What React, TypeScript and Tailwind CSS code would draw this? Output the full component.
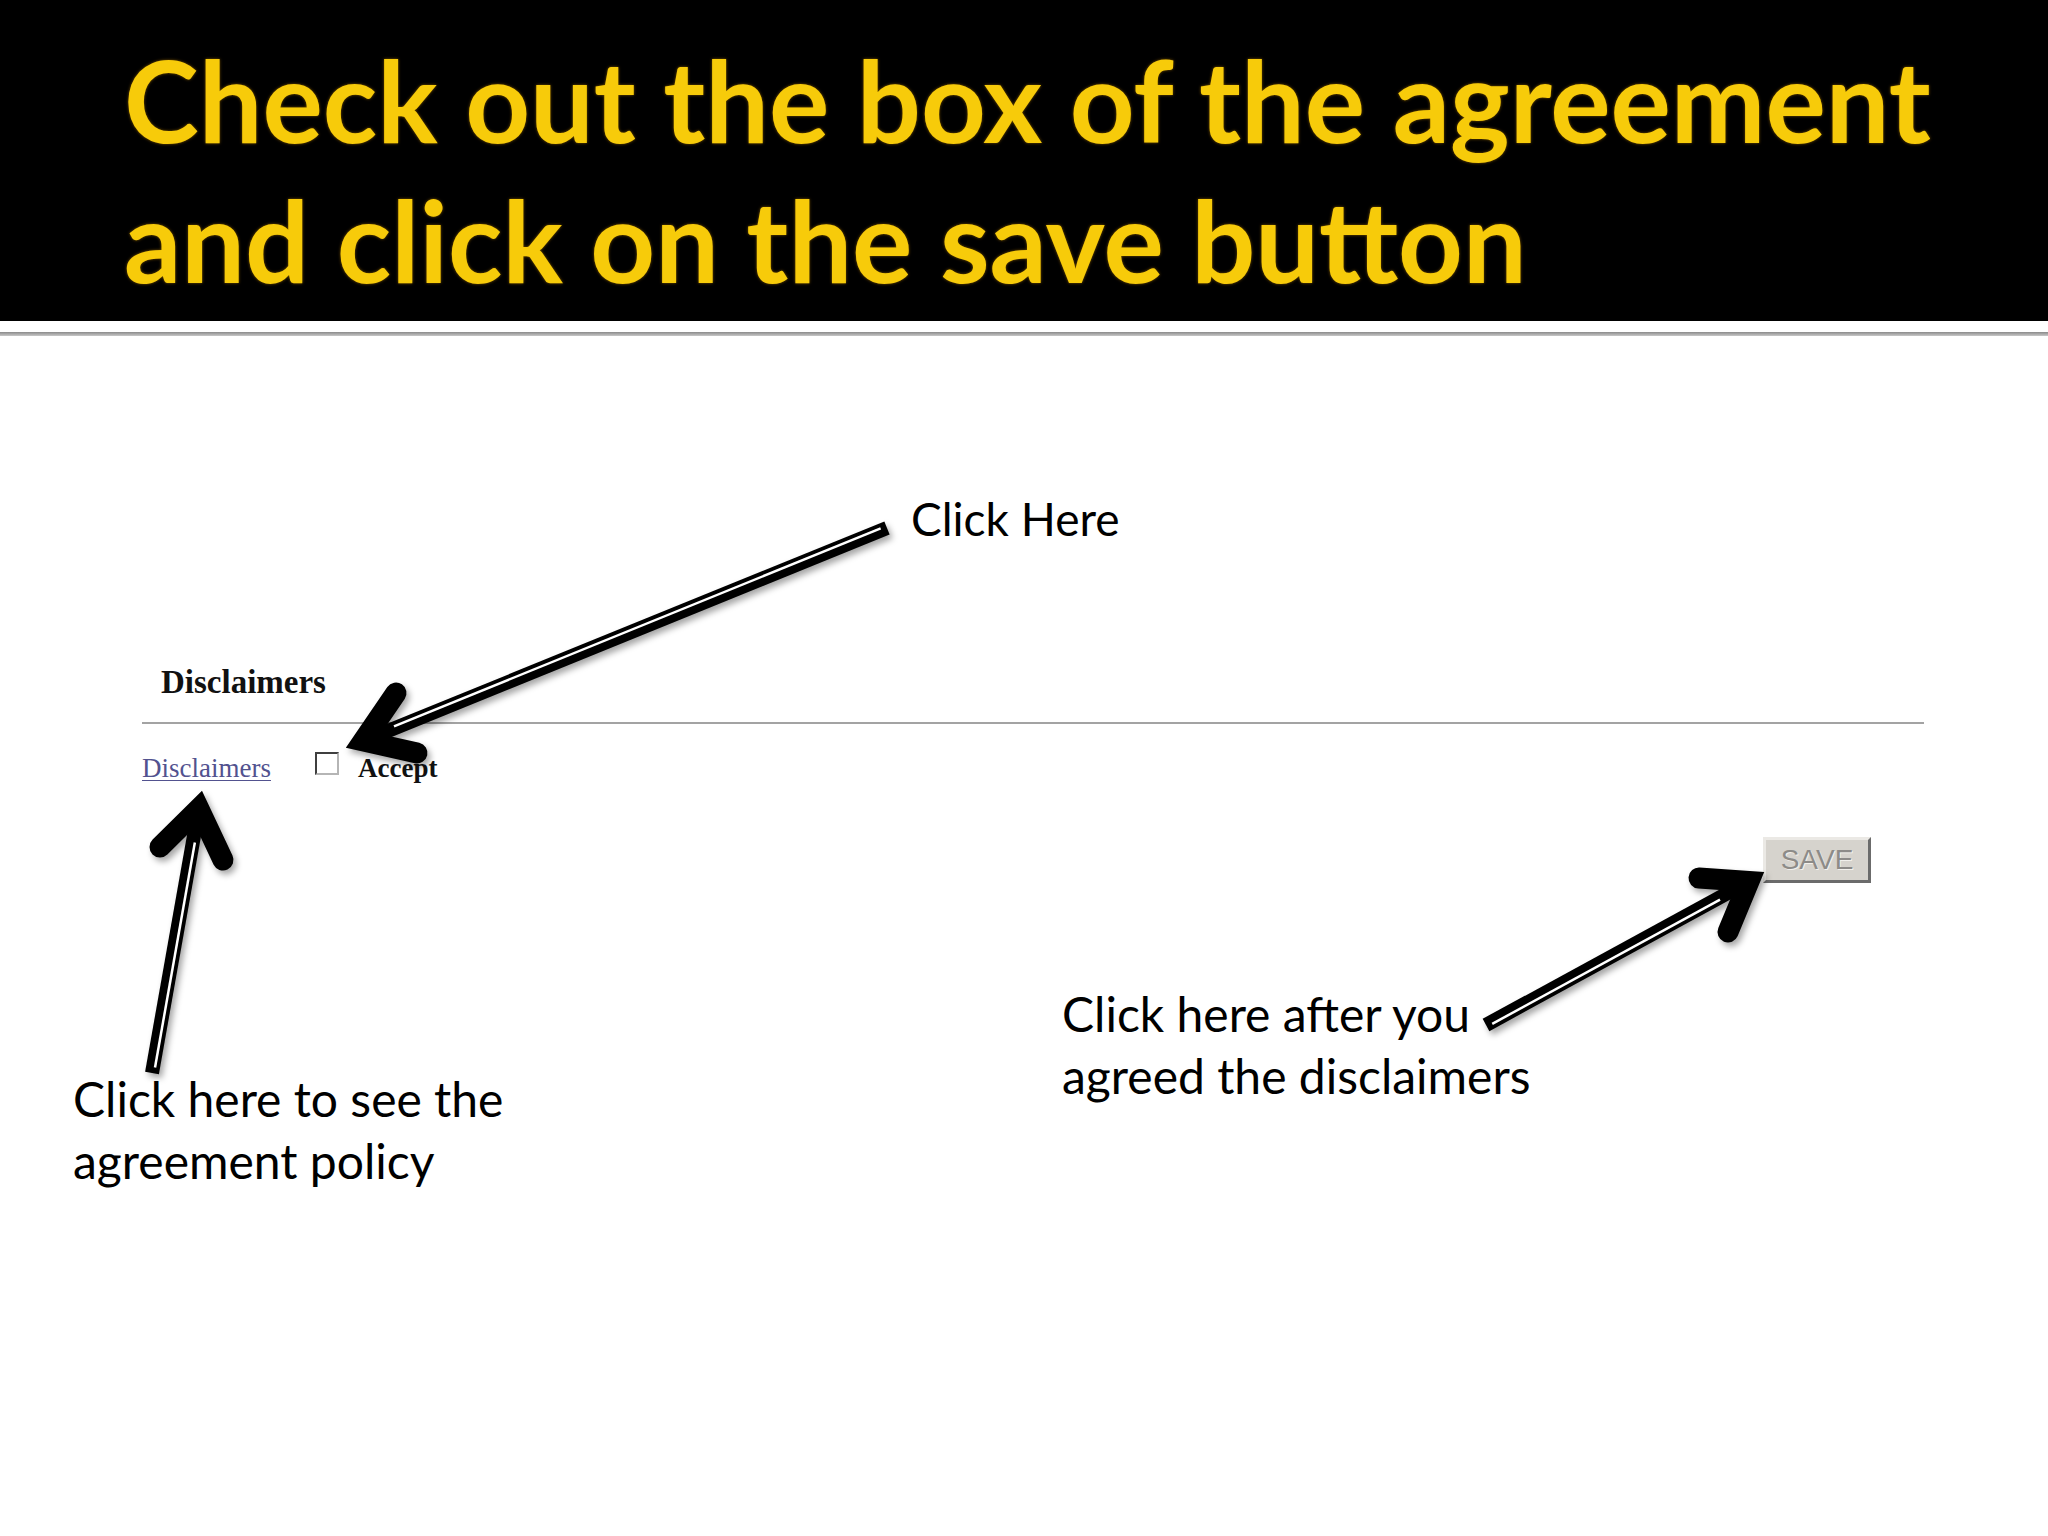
const Arrow = ({
  tail,
  tip,
  wings,
}: {
  tail: [number, number];
  tip: [number, number];
  wings: [[number, number], [number, number]];
}) => {
  const dx = tip[0] - tail[0];
  const dy = tip[1] - tail[1];
  const len = Math.hypot(dx, dy);
  const ux = dx / len;
  const uy = dy / len;
  // the miter pokes out past the vertex, so pull the vertex back
  const vx = tip[0] - ux * 24;
  const vy = tip[1] - uy * 24;
  const end: [number, number] = [vx - ux * 4, vy - uy * 4];
  const nx = -uy * 2;
  const ny = ux * 2;
  return (
    <g>
      <line x1={tail[0]} y1={tail[1]} x2={end[0]} y2={end[1]} stroke="#000" strokeWidth={14} />
      <line
        x1={tail[0] + ux * 6 + nx}
        y1={tail[1] + uy * 6 + ny}
        x2={end[0] - ux * 30 + nx}
        y2={end[1] - uy * 30 + ny}
        stroke="#fff"
        strokeWidth={2.5}
      />
      <path
        d={`M${wings[0][0]},${wings[0][1]} L${vx},${vy} L${wings[1][0]},${wings[1][1]}`}
        fill="none"
        stroke="#000"
        strokeWidth={21}
        strokeLinecap="round"
        strokeLinejoin="miter"
        strokeMiterlimit={6}
      />
    </g>
  );
};

const Callout = ({ className, children }: { className: string; children: React.ReactNode }) => {
  return (
    <p className={`absolute leading-[62px] text-black font-['Lato',sans-serif] ${className}`}>
      {children}
    </p>
  );
};

export default function App() {
  return (
    <div className="relative w-[2048px] h-[1536px] bg-white overflow-hidden">
      <header className="h-[321px] bg-black pl-[124px] pt-[29px]">
        <h1 className="text-[113px] leading-[140px] font-bold text-[#f7cb0a] font-['Lato',sans-serif] [text-shadow:0_0_3px_rgba(160,110,0,0.8)]">
          Check out the box of the agreement
          <br />
          and click on the save button
        </h1>
      </header>
      <div className="mt-[11px] h-[4px] bg-gradient-to-b from-[#8a8a8a] to-[#c8c8c8]" />

      <section className="pl-[142px] pt-[327px] font-['Liberation_Serif',serif]">
        <h2 className="pl-[19px] text-[33px] leading-[38px] font-bold text-[#111]">Disclaimers</h2>
        <hr className="mt-[21px] w-[1782px] border-0 h-[2px] bg-[#a3a3a3]" />
        <div className="mt-[28px] flex items-start">
          <a href="#" className="text-[27px] leading-[32px] text-[#52528f] underline decoration-1 underline-offset-[3px]">
            Disclaimers
          </a>
          <span className="ml-[44px] w-[24px] h-[23px] border-2 border-t-[#3f3f3f] border-l-[#3f3f3f] border-b-[#b5b5b5] border-r-[#b5b5b5] bg-white" />
          <span className="ml-[19px] text-[27px] leading-[32px] font-bold text-[#111]">Accept</span>
        </div>
        <div className="mt-[53px] flex justify-end pr-[177px]">
          <button className="w-[108px] h-[46px] bg-[#d6d3cd] border-[3px] border-t-[#ebe9e5] border-l-[#ebe9e5] border-r-[#6b6b6b] border-b-[#6b6b6b] text-[28px] leading-none text-[#8d8b88] font-['Liberation_Sans',sans-serif] [text-shadow:1px_1px_0_#f2f0ec]">
            SAVE
          </button>
        </div>
      </section>

      <Callout className="left-[911px] top-[488px] text-[46px]">Click Here</Callout>
      <Callout className="left-[1062px] top-[983px] text-[48px]">
        Click here after you
        <br />
        agreed the disclaimers
      </Callout>
      <Callout className="left-[73px] top-[1068px] text-[48px]">
        Click here to see the
        <br />
        agreement policy
      </Callout>

      <svg
        className="absolute inset-0 pointer-events-none [filter:drop-shadow(3px_4px_3px_rgba(0,0,0,0.35))]"
        width={2048}
        height={1536}
        viewBox="0 0 2048 1536"
      >
        <Arrow tail={[887, 528]} tip={[341, 750]} wings={[[396, 693], [417, 753]]} />
        <Arrow tail={[152, 1073]} tip={[203, 785]} wings={[[160, 847], [223, 860]]} />
        <Arrow tail={[1486, 1025]} tip={[1770, 870]} wings={[[1699, 878], [1728, 932]]} />
      </svg>
    </div>
  );
}
